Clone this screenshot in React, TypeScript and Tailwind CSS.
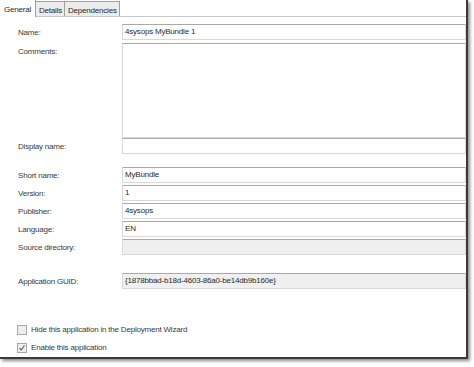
import React from "react";

const Row = ({ label, value, gray, top }: { label: string; value?: string; gray?: boolean; top: string }) => (
  <div className={`flex items-center h-[16px] ${top}`}>
    <div className="w-[122px] pl-[18px] pt-[1px] text-[8px] tracking-[-0.2px] text-[#3a3a3a]">{label}</div>
    <div
      className={`flex-1 h-[16px] border border-[#d8d8d8] border-t-[#a9a9a9] ${gray ? "bg-[#f0f0f0]" : "bg-white"} pl-[2px] text-[8px] tracking-[-0.2px] text-[#2a2a2a] leading-[14px]`}
    >
      {value}
    </div>
  </div>
);

export default function App() {
  return (
    <div className="w-[474px] h-[367px] bg-white overflow-hidden" style={{ fontFamily: '"Liberation Sans", Arial, sans-serif' }}>
      <div className="w-[468px] h-[359px] bg-white border-r-[2px] border-b-[2px] border-[#3a3a3a] shadow-[2px_2px_3px_rgba(0,0,0,0.45)] flex flex-col">
        <div className="flex items-end h-[17px] border-b border-[#c8c8c8] text-[8px] tracking-[-0.2px] text-[#2a2a2a]">
          <div className="w-[36px] h-[17px] pl-[4px] pt-[4px] bg-white border-r border-[#a0a0a0] relative -mb-px">General</div>
          <div className="w-[29px] h-[15px] pl-[3px] pt-[3px] bg-[#ececec] border-t border-r border-[#a0a0a0]">Details</div>
          <div className="w-[55px] h-[15px] pl-[3px] pt-[3px] bg-[#ececec] border-t border-r border-[#a0a0a0]">Dependencies</div>
        </div>
        <div className="flex flex-col">
          <Row top="mt-[7px]" label="Name:" value="4sysops MyBundle 1" />
          <div className="flex mt-[3px] h-[95px]">
            <div className="w-[122px] pl-[18px] text-[8px] tracking-[-0.2px] text-[#3a3a3a] pt-[3px]">Comments:</div>
            <div className="flex-1 border border-[#d8d8d8] border-t-[#a9a9a9] bg-white" />
          </div>
          <Row top="mt-[0px]" label="Display name:" />
          <Row top="mt-[13px]" label="Short name:" value="MyBundle" />
          <Row top="mt-[2px]" label="Version:" value="1" />
          <Row top="mt-[2px]" label="Publisher:" value="4sysops" />
          <Row top="mt-[2px]" label="Language:" value="EN" />
          <Row top="mt-[2px]" label="Source directory:" gray />
          <Row top="mt-[18px]" label="Application GUID:" value="{1878bbad-b18d-4603-86a0-be14db9b160e}" gray />
          <div className="flex items-center mt-[35px] pl-[17px] h-[12px] text-[8px] tracking-[-0.2px] text-[#3a3a3a]">
            <div className="w-[10px] h-[10px] border border-[#a8a8a8] bg-[#eeeeee] mr-[4px]" />
            Hide this application in the Deployment Wizard
          </div>
          <div className="flex items-center mt-[6px] pl-[17px] h-[12px] text-[8px] tracking-[-0.2px] text-[#3a3a3a]">
            <div className="w-[10px] h-[10px] border border-[#a8a8a8] bg-[#eeeeee] mr-[4px] flex items-center justify-center">
              <svg width="8" height="8" viewBox="0 0 8 8"><path d="M1.5 4.2 L3.2 6 L6.5 1.5" stroke="#555" strokeWidth="1.1" fill="none" /></svg>
            </div>
            Enable this application
          </div>
        </div>
      </div>
    </div>
  );
}
